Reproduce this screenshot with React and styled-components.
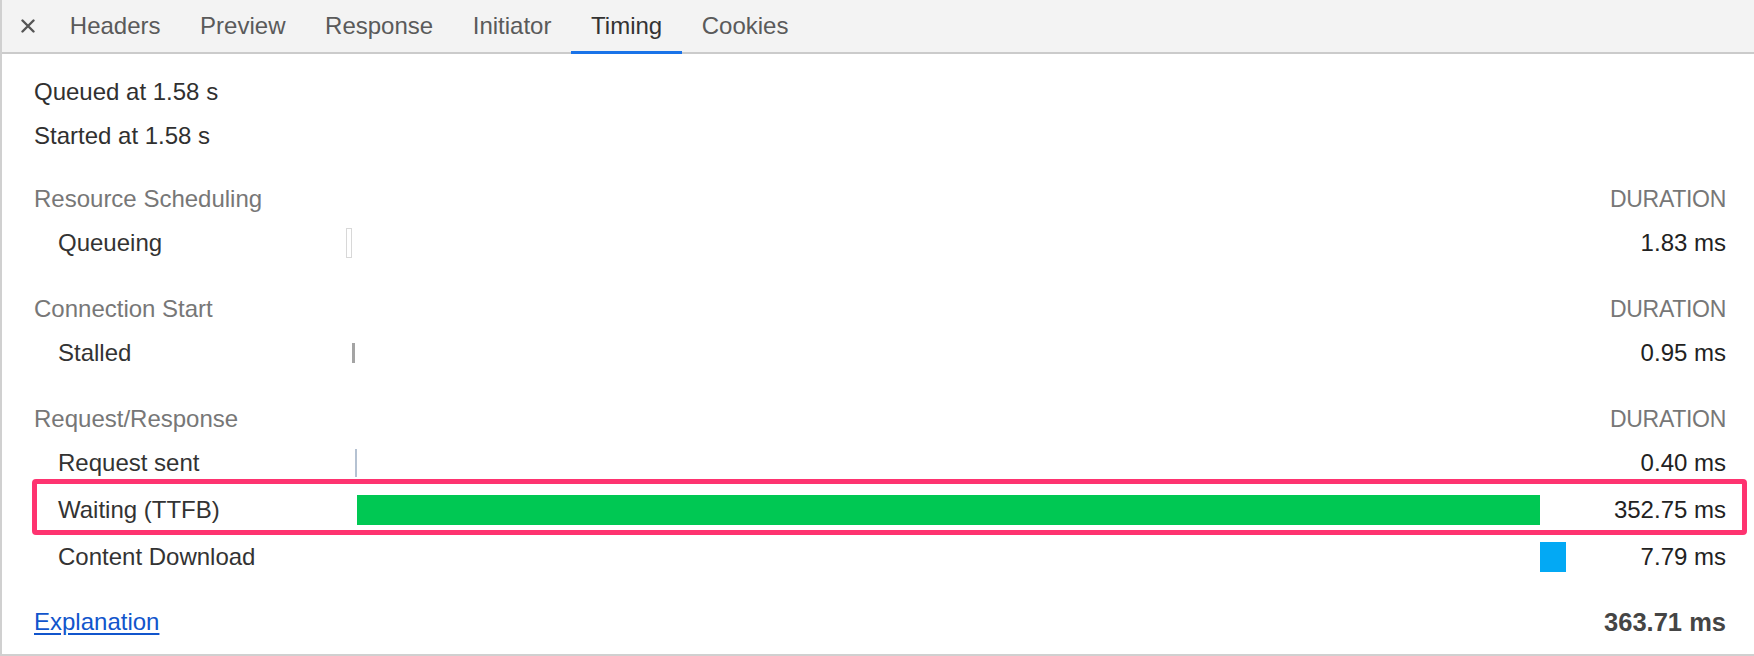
import React from 'react';
import styled, { createGlobalStyle } from 'styled-components';

const GlobalStyle = createGlobalStyle`
  html, body {
    margin: 0;
    padding: 0;
    background: #fff;
  }
  body {
    font-family: 'Liberation Sans', Helvetica, Arial, sans-serif;
  }
`;

const Panel = styled.div`
  background: #fff;
  border-bottom: 2px solid #d0d0d0;
  border-left: 2px solid #d0d0d0;
  box-sizing: border-box;
  display: flex;
  flex-direction: column;
  font-family: 'Liberation Sans', Helvetica, Arial, sans-serif;
  height: 656px;
  width: 1754px;
`;

const TabBar = styled.div`
  align-items: stretch;
  background: #f3f3f3;
  box-shadow: inset 0 -2px 0 #cbcbcb;
  display: flex;
  height: 54px;
`;

const CloseButton = styled.div`
  align-items: center;
  display: flex;
  justify-content: center;
  padding: 0 0 2px 4px;
  width: 44px;
`;

const Tab = styled.div`
  align-items: center;
  box-shadow: ${props => (props.$active ? 'inset 0 -3px 0 #1a73e8' : 'none')};
  color: ${props => (props.$active ? '#333' : '#5a5a5a')};
  display: flex;
  font-size: 24px;
  padding: 0 19.8px 2px;
`;

const Content = styled.div`
  display: flex;
  flex: 1;
  flex-direction: column;
  padding: 16px 28px 0 32px;
`;

const InfoRow = styled.div`
  align-items: center;
  color: #303030;
  display: flex;
  font-size: 24px;
  height: 44px;
`;

const Section = styled.div`
  display: flex;
  flex-direction: column;
  margin-top: ${props => props.$gap}px;
`;

const SectionHeader = styled.div`
  align-items: center;
  color: #777;
  display: flex;
  font-size: 24px;
  height: 44px;
  justify-content: space-between;
`;

const DurationLabel = styled.span`
  font-size: 23px;
  letter-spacing: -0.3px;
`;

const TimingRow = styled.div`
  align-items: center;
  display: grid;
  grid-template-columns: 312px 1220px 1fr;
  height: 44px;
`;

const RowLabel = styled.div`
  color: #333;
  font-size: 24px;
  padding-left: 24px;
`;

const HighlightRow = styled(TimingRow)`
  border: 5px solid #fe3370;
  border-radius: 4px;
  box-sizing: border-box;
  grid-template-columns: 309px 1220px 1fr;
  height: 56px;
  margin: -6px -21px 0 -2px;
  padding: 6px 16px 0 0;

  & ${RowLabel} {
    padding-left: 21px;
  }
`;

const Track = styled.div`
  align-items: center;
  display: flex;
  height: 100%;
`;

const Bar = styled.div`
  background: ${props => (props.$outline ? '#fff' : props.$color)};
  border: ${props => (props.$outline ? `1.5px solid ${props.$color}` : 'none')};
  box-sizing: border-box;
  flex: none;
  height: ${props => props.$height}px;
  min-width: 2px;
`;

const Value = styled.div`
  color: #222;
  font-size: 24px;
  text-align: right;
`;

const Footer = styled.div`
  align-items: center;
  display: flex;
  height: 44px;
  justify-content: space-between;
  margin-top: 21px;
`;

const Link = styled.a`
  color: #1155cc;
  cursor: pointer;
  font-size: 24px;
  text-decoration: underline;
  text-underline-offset: 3px;
`;

const Total = styled.div`
  color: #454545;
  font-size: 25.5px;
  font-weight: 700;
`;

const tabs = ['Headers', 'Preview', 'Response', 'Initiator', 'Timing', 'Cookies'];

const sections = [
  {
    title: 'Resource Scheduling',
    gap: 19,
    rows: [{ label: 'Queueing', ms: 1.83, color: '#d8d8d8', height: 30, outline: true }],
  },
  {
    title: 'Connection Start',
    gap: 22,
    rows: [{ label: 'Stalled', ms: 0.95, color: '#a4a4a4', height: 20 }],
  },
  {
    title: 'Request/Response',
    gap: 22,
    rows: [
      { label: 'Request sent', ms: 0.4, color: '#b5c2d2', height: 28 },
      { label: 'Waiting (TTFB)', ms: 352.75, color: '#00c853', height: 30, highlight: true },
      { label: 'Content Download', ms: 7.79, color: '#03a9f4', height: 30 },
    ],
  },
];

const total = sections.reduce((sum, s) => sum + s.rows.reduce((a, r) => a + r.ms, 0), 0);

const CloseIcon = () => (
  <svg width="14" height="14" viewBox="0 0 14 14">
    <path d="M1.5 1.5L12.5 12.5M12.5 1.5L1.5 12.5" stroke="#555" strokeWidth="2.4" strokeLinecap="round" />
  </svg>
);

const App = () => {
  let elapsed = 0;

  const renderRow = row => {
    const start = elapsed;
    elapsed += row.ms;
    const RowComponent = row.highlight ? HighlightRow : TimingRow;
    return (
      <RowComponent key={row.label}>
        <RowLabel>{row.label}</RowLabel>
        <Track>
          <Bar
            $color={row.color}
            $height={row.height}
            $outline={row.outline}
            style={{ marginLeft: `${(start / total) * 100}%`, width: `${(row.ms / total) * 100}%` }}
          />
        </Track>
        <Value>{row.ms.toFixed(2)} ms</Value>
      </RowComponent>
    );
  };

  return (
    <>
      <GlobalStyle />
      <Panel>
        <TabBar>
          <CloseButton>
            <CloseIcon />
          </CloseButton>
          {tabs.map(tab => (
            <Tab key={tab} $active={tab === 'Timing'}>
              {tab}
            </Tab>
          ))}
        </TabBar>
        <Content>
          <InfoRow>Queued at 1.58 s</InfoRow>
          <InfoRow>Started at 1.58 s</InfoRow>
          {sections.map(section => (
            <Section key={section.title} $gap={section.gap}>
              <SectionHeader>
                <span>{section.title}</span>
                <DurationLabel>DURATION</DurationLabel>
              </SectionHeader>
              {section.rows.map(renderRow)}
            </Section>
          ))}
          <Footer>
            <Link>Explanation</Link>
            <Total>363.71 ms</Total>
          </Footer>
        </Content>
      </Panel>
    </>
  );
};

export default App;
